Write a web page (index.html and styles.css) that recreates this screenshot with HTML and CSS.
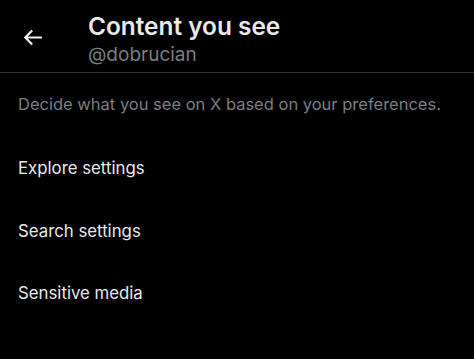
FILE: index.html
```html
<!DOCTYPE html>
<html>
<head>
<meta charset="utf-8">
<link rel="stylesheet" href="styles.css">
</head>
<body>
<header class="header">
  <div class="back">
    <svg viewBox="0 0 24 24" width="25" height="25"><path d="M7.414 13l5.043 5.04-1.414 1.42L3.586 12l7.457-7.46 1.414 1.42L7.414 11H21v2H7.414z" fill="#f2f3f4"/></svg>
  </div>
  <div class="titles">
    <div class="title">Content you see</div>
    <div class="handle">@dobrucian</div>
  </div>
</header>
<p class="desc">Decide what you see on X based on your preferences.</p>
<ul class="list">
  <li class="item">Explore settings</li>
  <li class="item">Search settings</li>
  <li class="item">Sensitive media</li>
</ul>
</body>
</html>
```
FILE: styles.css
```css
html, body {
  margin: 0;
  padding: 0;
  background: #000;
  height: 100%;
}
body {
  font-family: "Inter", "Roboto", sans-serif;
  color: #e7e9ea;
}
.header {
  display: flex;
  align-items: flex-start;
  height: 73px;
  border-bottom: 1px solid #2f3336;
  box-sizing: border-box;
}
.back {
  width: 88px;
  padding-left: 20px;
  padding-top: 25px;
  box-sizing: border-box;
}
.back svg { display: block; }
.titles {
  padding-top: 11px;
}
.title {
  font-size: 24.4px;
  font-weight: 600;
  line-height: 31px;
  color: #e7e9ea;
}
.handle {
  font-size: 19px;
  line-height: 26px;
  color: #797e83;
}
.desc {
  margin: 0;
  padding: 19px 18px 0;
  font-size: 16.5px;
  line-height: 24px;
  color: #797e83;
}
.list {
  list-style: none;
  margin: 0;
  padding: 0;
}
.item {
  padding: 0 18px;
  font-size: 16.8px;
  line-height: 24px;
  height: 62.5px;
  display: flex;
  align-items: center;
}
.list .item:first-child { margin-top: 21px; }
```
